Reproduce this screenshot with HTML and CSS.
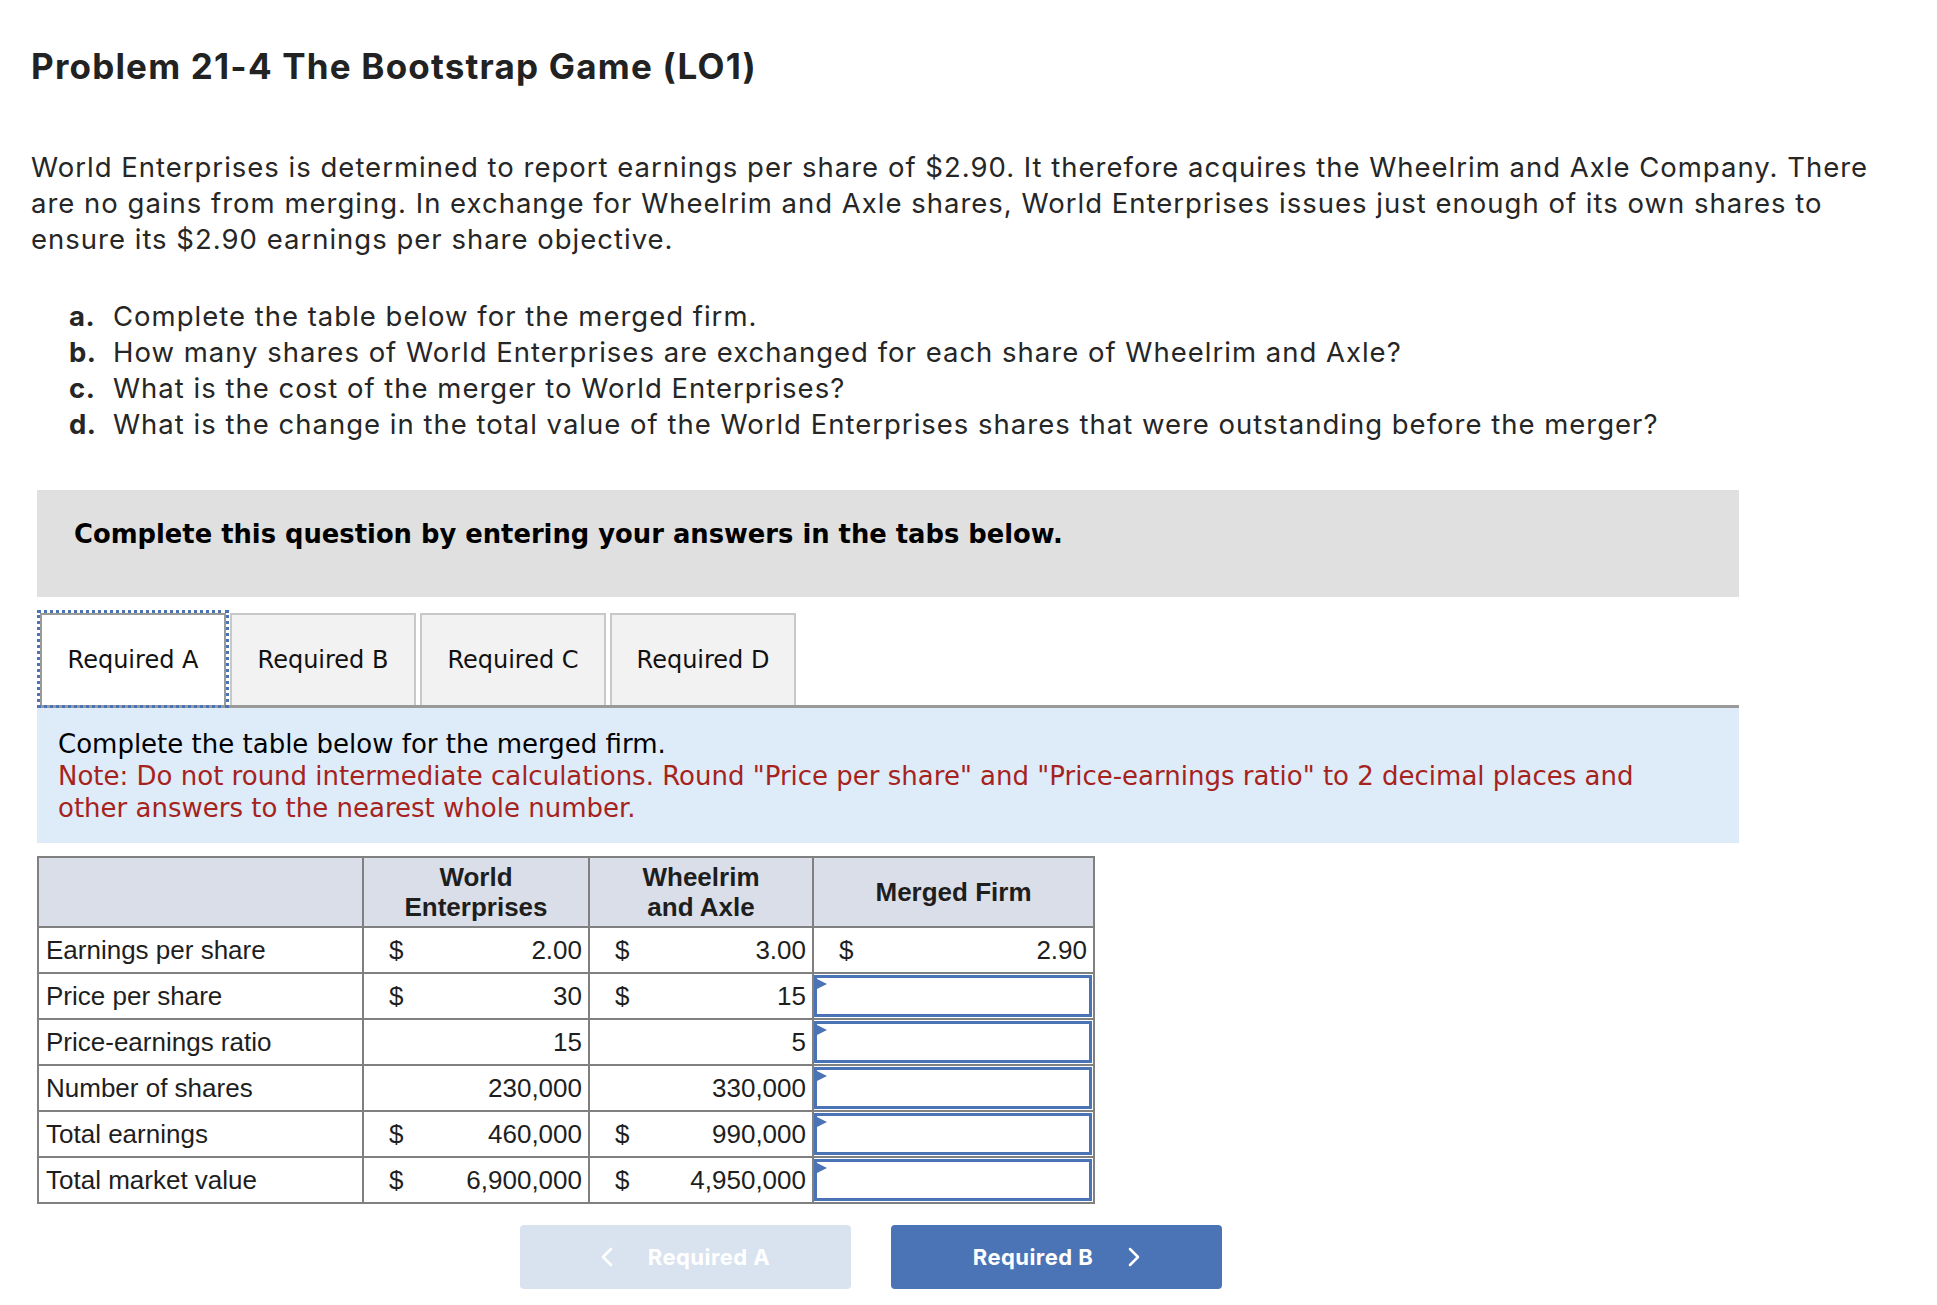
FILE: index.html
```html
<!DOCTYPE html>
<html lang="en">
<head>
<meta charset="utf-8">
<title>Problem 21-4 The Bootstrap Game (LO1)</title>
<link rel="stylesheet" href="styles.css">
</head>
<body>
<main class="page">
  <h1 class="title">Problem 21-4 The Bootstrap Game (LO1)</h1>
  <p class="intro">World Enterprises is determined to report earnings per share of $2.90. It therefore acquires the Wheelrim and Axle Company. There are no gains from merging. In exchange for Wheelrim and Axle shares, World Enterprises issues just enough of its own shares to ensure its $2.90 earnings per share objective.</p>
  <ul class="parts">
    <li><span class="mk">a.</span><span>Complete the table below for the merged firm.</span></li>
    <li><span class="mk">b.</span><span>How many shares of World Enterprises are exchanged for each share of Wheelrim and Axle?</span></li>
    <li><span class="mk">c.</span><span>What is the cost of the merger to World Enterprises?</span></li>
    <li><span class="mk">d.</span><span>What is the change in the total value of the World Enterprises shares that were outstanding before the merger?</span></li>
  </ul>

  <section class="question">
    <div class="instr">Complete this question by entering your answers in the tabs below.</div>

    <div class="tabs">
      <div class="tab active">Required A</div>
      <div class="tab">Required B</div>
      <div class="tab">Required C</div>
      <div class="tab">Required D</div>
    </div>

    <div class="panel">
      <div class="lead">Complete the table below for the merged firm.</div>
      <div class="note">Note: Do not round intermediate calculations. Round "Price per share" and "Price-earnings ratio" to 2 decimal places and<br>other answers to the nearest whole number.</div>
    </div>

    <table class="grid">
      <colgroup>
        <col class="c-label">
        <col class="c-world">
        <col class="c-wheel">
        <col class="c-merged">
      </colgroup>
      <thead>
        <tr>
          <th></th>
          <th>World<br>Enterprises</th>
          <th>Wheelrim<br>and Axle</th>
          <th>Merged Firm</th>
        </tr>
      </thead>
      <tbody>
        <tr>
          <td class="lbl">Earnings per share</td>
          <td class="num"><div class="amt"><span>$</span><span class="v">2.00</span></div></td>
          <td class="num"><div class="amt"><span>$</span><span class="v">3.00</span></div></td>
          <td class="num"><div class="amt"><span>$</span><span class="v">2.90</span></div></td>
        </tr>
        <tr>
          <td class="lbl">Price per share</td>
          <td class="num"><div class="amt"><span>$</span><span class="v">30</span></div></td>
          <td class="num"><div class="amt"><span>$</span><span class="v">15</span></div></td>
          <td class="ans"><input class="inp" type="text" aria-label="Merged firm price per share"><span class="flag"></span></td>
        </tr>
        <tr>
          <td class="lbl">Price-earnings ratio</td>
          <td class="num"><div class="amt"><span class="v">15</span></div></td>
          <td class="num"><div class="amt"><span class="v">5</span></div></td>
          <td class="ans"><input class="inp" type="text" aria-label="Merged firm price-earnings ratio"><span class="flag"></span></td>
        </tr>
        <tr>
          <td class="lbl">Number of shares</td>
          <td class="num"><div class="amt"><span class="v">230,000</span></div></td>
          <td class="num"><div class="amt"><span class="v">330,000</span></div></td>
          <td class="ans"><input class="inp" type="text" aria-label="Merged firm number of shares"><span class="flag"></span></td>
        </tr>
        <tr>
          <td class="lbl">Total earnings</td>
          <td class="num"><div class="amt"><span>$</span><span class="v">460,000</span></div></td>
          <td class="num"><div class="amt"><span>$</span><span class="v">990,000</span></div></td>
          <td class="ans"><input class="inp" type="text" aria-label="Merged firm total earnings"><span class="flag"></span></td>
        </tr>
        <tr>
          <td class="lbl">Total market value</td>
          <td class="num"><div class="amt"><span>$</span><span class="v">6,900,000</span></div></td>
          <td class="num"><div class="amt"><span>$</span><span class="v">4,950,000</span></div></td>
          <td class="ans"><input class="inp" type="text" aria-label="Merged firm total market value"><span class="flag"></span></td>
        </tr>
      </tbody>
    </table>

    <div class="nav">
      <button class="btn btn-prev" type="button" disabled>
        <svg class="chev" width="12" height="20" viewBox="0 0 12 20" aria-hidden="true"><polyline points="10,2 2,10 10,18"/></svg>
        <span>Required A</span>
      </button>
      <button class="btn btn-next" type="button">
        <span>Required B</span>
        <svg class="chev" width="12" height="20" viewBox="0 0 12 20" aria-hidden="true"><polyline points="2,2 10,10 2,18"/></svg>
      </button>
    </div>
  </section>
</main>
</body>
</html>
```

FILE: styles.css
```css
* { box-sizing: border-box; }

html, body {
  margin: 0;
  padding: 0;
  background: #ffffff;
}

.page {
  padding: 46px 31px 0 31px;
  font-family: "Inter", "Lato", sans-serif;
  color: #262626;
}

.title {
  margin: 0;
  font-family: "Inter", sans-serif;
  font-weight: 700;
  font-size: 35px;
  letter-spacing: 1.2px;
  line-height: 40px;
  color: #222222;
}

.intro {
  margin: 63px 0 0 0;
  max-width: 1870px;
  font-size: 27.5px;
  letter-spacing: 1px;
  line-height: 36px;
}

.parts {
  list-style: none;
  margin: 41px 0 0 0;
  padding: 0 0 0 38px;
  font-size: 27.5px;
  letter-spacing: 1px;
  line-height: 36px;
}

.parts li {
  display: flex;
}

.parts .mk {
  width: 44px;
  flex: none;
  font-weight: 700;
  letter-spacing: 0.5px;
}

.question {
  margin: 48px 0 0 6px;
  width: 1702px;
}

.instr {
  background: #e0e0e0;
  padding: 28px 37px 47px 37px;
  font-family: "DejaVu Sans", Verdana, sans-serif;
  font-weight: 700;
  font-size: 25.8px;
  line-height: 32px;
  color: #000000;
}

.tabs {
  display: flex;
  gap: 4px;
  margin-top: 16px;
  padding-left: 3px;
  border-bottom: 3px solid #9a9a9a;
}

.tab {
  width: 186px;
  height: 92px;
  display: flex;
  align-items: center;
  justify-content: center;
  background: #f2f2f2;
  border: 2px solid #c8c8c8;
  border-bottom: 0;
  font-family: "DejaVu Sans", Verdana, sans-serif;
  font-size: 24px;
  color: #111111;
}

.tab.active {
  background: #ffffff;
  border-color: #9a9a9a;
  outline: 3px dotted #4a74b5;
}

.panel {
  background: #deebf8;
  padding: 20px 21px 19px 21px;
  font-family: "DejaVu Sans", Verdana, sans-serif;
  font-size: 26px;
  line-height: 32px;
}

.panel .lead {
  color: #000000;
}

.panel .note {
  color: #a6231d;
}

.grid {
  margin-top: 13px;
  border-collapse: collapse;
  table-layout: fixed;
  width: 1056px;
  font-family: "Liberation Sans", Arial, sans-serif;
  font-size: 26px;
  color: #1e1e1e;
}

.grid .c-label { width: 325px; }
.grid .c-world { width: 226px; }
.grid .c-wheel { width: 224px; }
.grid .c-merged { width: 281px; }

.grid th,
.grid td {
  border: 2px solid #808080;
  padding: 0;
}

.grid thead tr { height: 70px; }
.grid tbody tr { height: 46px; }

.grid th {
  background: #d9dee9;
  font-weight: 700;
  line-height: 30px;
  text-align: center;
  vertical-align: middle;
}

.grid .lbl {
  padding-left: 7px;
  white-space: nowrap;
}

.grid .num {
  padding: 0 6px 0 25px;
}

.amt {
  display: flex;
}

.amt .v {
  margin-left: auto;
}

.grid .ans {
  position: relative;
  padding: 1px 1px 1px 0;
}

.inp {
  display: block;
  width: 100%;
  height: 42px;
  margin: 0;
  border: 3px solid #4a74b5;
  background: #ffffff;
  font: inherit;
  padding: 0 6px;
  outline: none;
}

.flag {
  position: absolute;
  left: 1px;
  top: 4px;
  width: 0;
  height: 0;
  border-left: 12px solid #4a74b5;
  border-top: 6px solid transparent;
  border-bottom: 6px solid transparent;
}

.nav {
  display: flex;
  gap: 40px;
  margin-top: 21px;
  padding-left: 483px;
}

.btn {
  width: 331px;
  height: 64px;
  border: 0;
  border-radius: 4px;
  display: flex;
  align-items: center;
  justify-content: center;
  gap: 35px;
  font-family: "Inter", sans-serif;
  font-weight: 700;
  font-size: 22px;
  letter-spacing: 0.45px;
  color: #ffffff;
  padding: 0;
}

.btn-prev {
  background: #d9e3ef;
}

.btn-next {
  background: #4a74b5;
}

.chev polyline {
  fill: none;
  stroke: #ffffff;
  stroke-width: 2.5;
  stroke-linecap: round;
  stroke-linejoin: round;
}
```
